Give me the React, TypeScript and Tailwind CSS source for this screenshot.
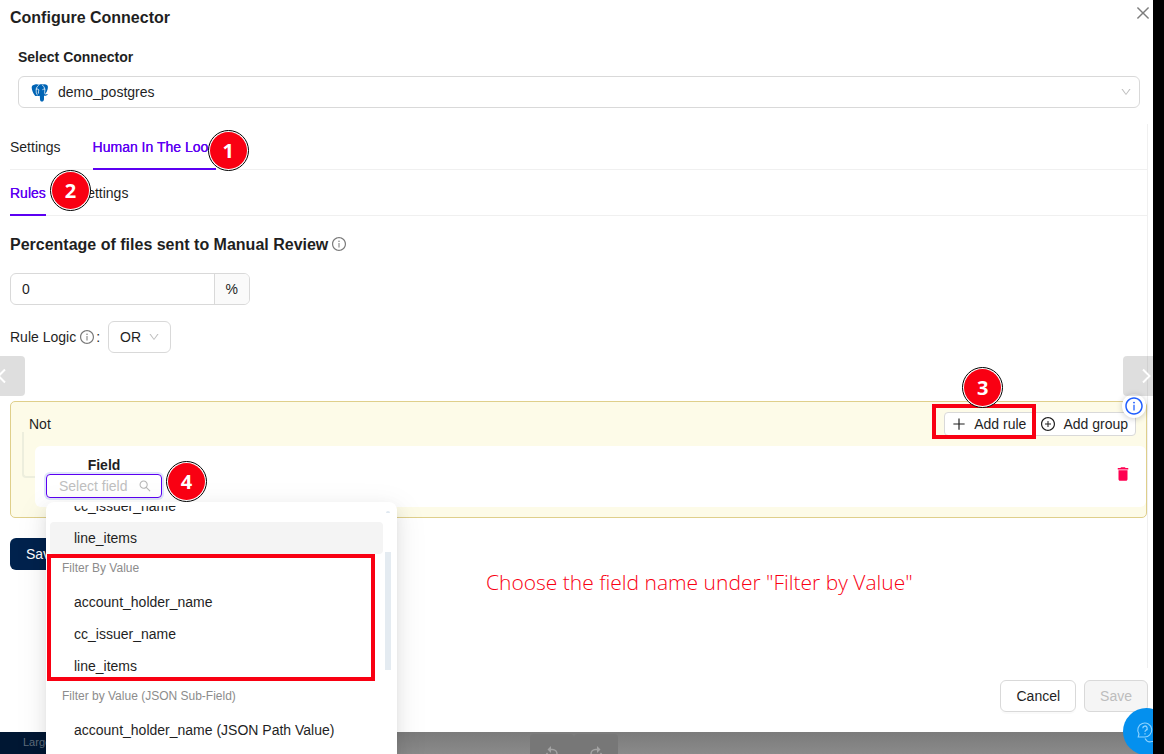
import { useState, type ReactNode } from 'react';
import {
  AiOutlineClose,
  AiOutlineDown,
  AiOutlineInfoCircle,
  AiOutlinePlus,
  AiOutlinePlusCircle,
  AiOutlineSearch,
} from 'react-icons/ai';
import { MdDelete } from 'react-icons/md';

const FIELD_GROUPS = [
  { label: '', options: ['cc_issuer_name', 'line_items'] },
  { label: 'Filter By Value', options: ['account_holder_name', 'cc_issuer_name', 'line_items'] },
  { label: 'Filter by Value (JSON Sub-Field)', options: ['account_holder_name (JSON Path Value)'] },
];

export default function App() {
  const [tab, setTab] = useState('Human In The Loop');
  const [subTab, setSubTab] = useState('Rules');

  return (
    <div className="relative flex h-screen overflow-hidden bg-black font-['Liberation_Sans',Arial,sans-serif] text-sm leading-[22px] text-[#1f1f1f]">
      <div className="relative flex min-w-0 flex-1 flex-col overflow-hidden bg-white">
        <main className="flex min-h-0 flex-1 flex-col pr-[5px] pb-5 pl-2.5">
          <header className="flex items-start justify-between pt-1">
            <h1 className="pt-0.5 text-base leading-6 font-bold">Configure Connector</h1>
            <button aria-label="Close" className="-mr-1 text-[#7d7d7d]">
              <AiOutlineClose size={18} />
            </button>
          </header>

          <div className="mt-4 pr-2 pl-2">
            <label htmlFor="connector" className="block font-bold">Select Connector</label>
            <div className="relative mt-2">
              <select id="connector" className="h-8 w-full appearance-none rounded-md border border-[#d9d9d9] bg-white pl-[39px]">
                <option>demo_postgres</option>
              </select>
              <PostgresLogo />
              <AiOutlineDown size={12} className="pointer-events-none absolute top-2.5 right-2 text-[#bfbfbf]" />
            </div>
          </div>

          <section className="mt-4 flex-1 border-r border-[#f0f0f0]">
            <nav className="flex gap-8 border-b border-[#f0f0f0]">
              <Tab label="Settings" active={tab === 'Settings'} onClick={() => setTab('Settings')} />
              <div className="relative">
                <Tab label="Human In The Loop" active={tab === 'Human In The Loop'} onClick={() => setTab('Human In The Loop')} />
                <Step className="top-1.5 left-[115px]">1</Step>
              </div>
            </nav>
            <nav className="flex gap-8 border-b border-[#f0f0f0]">
              <div className="relative">
                <Tab label="Rules" active={subTab === 'Rules'} onClick={() => setSubTab('Rules')} />
                <Step className="top-0 left-10">2</Step>
              </div>
              <Tab label="Settings" active={subTab === 'Settings'} onClick={() => setSubTab('Settings')} />
            </nav>

            <label htmlFor="percentage" className="mt-4 flex items-center gap-[3px] text-base leading-[26px] font-bold">
              Percentage of files sent to Manual Review
              <AiOutlineInfoCircle size={16} className="-mt-0.5 text-[#7a7a7a]" />
            </label>
            <div className="mt-[15px] flex h-8 w-60 overflow-hidden rounded-md border border-[#d9d9d9]">
              <input id="percentage" defaultValue="0" className="min-w-0 flex-1 px-[11px]" />
              <span className="flex items-center border-l border-[#d9d9d9] bg-[#fafafa] px-[11px]">%</span>
            </div>

            <div className="mt-4 flex items-center">
              <label htmlFor="logic" className="flex items-center gap-[3px]">
                Rule Logic
                <span className="flex items-center gap-px">
                  <AiOutlineInfoCircle size={16} className="text-[#7a7a7a]" />:
                </span>
              </label>
              <div className="relative ml-2">
                <select id="logic" className="h-8 w-[63px] appearance-none rounded-md border border-[#d9d9d9] bg-white pl-[11px]">
                  <option>OR</option>
                  <option>AND</option>
                </select>
                <AiOutlineDown size={12} className="pointer-events-none absolute top-2.5 right-[11px] text-[#bfbfbf]" />
              </div>
            </div>

            <RuleGroup />

            <button className="mt-5 h-8 rounded-md bg-[#00224d] px-4 text-white">Save</button>
          </section>

          <footer className="mt-3 flex justify-end gap-2">
            <button className="h-8 rounded-md border border-[#d9d9d9] px-[15px] shadow-[0_2px_0_rgba(0,0,0,0.02)]">Cancel</button>
            <button disabled className="h-8 rounded-md border border-[#d9d9d9] bg-[#f5f5f5] px-[15px] text-[#bdbdbd]">Save</button>
          </footer>
        </main>

        <BackdropStrip />

        <p className="absolute top-[566px] left-[486px] font-['Open_Sans','Noto_Sans',sans-serif] text-[21px] leading-8 font-light text-[#f90012]">
          Choose the field name under "Filter by Value"
        </p>

        <button
          aria-label="Help"
          className="absolute top-[394px] right-[7px] flex size-6 items-center justify-center rounded-full bg-white text-[#1f5eff] shadow-[0_1px_6px_rgba(0,0,0,0.2)]"
        >
          <AiOutlineInfoCircle size={20} />
        </button>
        <button aria-label="Chat" className="absolute -right-[17px] -bottom-px flex size-[47px] items-center justify-center rounded-full bg-[#0490ee] text-[#8fd3ff]">
          <ChatIcon />
        </button>
      </div>
      <div className="w-[11px] shrink-0" />

      {/* carousel arrows */}
      <button aria-label="Previous" className="absolute top-[356px] -left-[22px] flex h-10 w-[47px] items-center justify-center rounded-r bg-black/13 text-white">
        <Chevron d="M9 1.5 2.5 8 9 14.5" />
      </button>
      <button aria-label="Next" className="absolute top-[356px] -right-1.5 flex h-10 w-[47px] items-center justify-center rounded-l bg-black/13 text-white">
        <Chevron d="M2 1.5 8.5 8 2 14.5" />
      </button>
    </div>
  );
}

function Tab({ label, active, onClick }: { label: string; active: boolean; onClick: () => void }) {
  return (
    <button
      onClick={onClick}
      className={`-mb-px block h-[46px] border-b-2 pt-0.5 ${active ? 'border-[#5c00f2] text-[#5c00f2] [text-shadow:0_0_0.25px_currentcolor]' : 'border-transparent'}`}
    >
      {label}
    </button>
  );
}

// Numbered walkthrough marker
function Step({ children, className }: { children: ReactNode; className: string }) {
  return (
    <span
      className={`absolute z-20 flex size-[41px] items-center justify-center rounded-full border border-black bg-white p-px ${className}`}
    >
      <span className="flex size-full items-center justify-center rounded-full bg-[#f90012] font-['Open_Sans','Noto_Sans',sans-serif] text-xl font-bold text-white">
        {children}
      </span>
    </span>
  );
}

function RuleGroup() {
  return (
    <div className="mt-12 rounded-[5px] border border-[#dfcf8b] bg-[#fdfbe8] py-2.5 pl-[11px]">
      <div className="flex h-6 items-center justify-between pr-2.5 pl-[7px]">
        <span>Not</span>
        <div className="flex">
          <div className="relative z-10">
            <button className="flex h-6 items-center gap-[7px] rounded-l border border-[#d9d9d9] bg-white pr-[7px] pl-1.5">
              <AiOutlinePlus size={16} />
              Add rule
            </button>
            <div className="pointer-events-none absolute -top-2 -right-0.5 -bottom-[3px] -left-3 border-4 border-[#f90012]" />
            <Step className="-top-[45px] left-[18px]">3</Step>
          </div>
          <button className="-ml-px flex h-6 items-center gap-[7px] rounded-r border border-[#d9d9d9] bg-white pr-[7px] pl-1.5">
            <AiOutlinePlusCircle size={16} />
            Add group
          </button>
        </div>
      </div>

      <div className="mt-2.5 flex items-start">
        <div className="-mt-3.5 h-[46px] w-[13px] shrink-0 rounded-bl border-b-2 border-l-2 border-[#edeedd]" />
        <div className="flex flex-1 items-start justify-between rounded-md bg-white pt-2 pr-3.5 pb-[9px] pl-[11px]">
          <div className="relative w-[116px]">
            <label htmlFor="field" className="block pt-0.5 text-center leading-[18px] font-bold">Field</label>
            <input
              id="field"
              placeholder="Select field"
              className="block h-6 w-full rounded border border-[#5c00f2] pr-7 pl-3 shadow-[0_0_0_2px_#dfe6fa] outline-none placeholder:text-[#bfbfbf]"
            />
            <AiOutlineSearch size={14} className="absolute right-2.5 bottom-[5px] text-[#b5b5b5]" />
            <Step className="top-[7px] left-[120px]">4</Step>
            <FieldDropdown />
          </div>
          <button aria-label="Delete rule" className="mt-[11px] text-[#ff0051]">
            <MdDelete size={18} />
          </button>
        </div>
      </div>
    </div>
  );
}

function FieldDropdown() {
  return (
    <div className="absolute top-full left-0 z-10 mt-1 w-[351px] rounded-lg bg-white p-1 shadow-[0_6px_16px_rgba(0,0,0,0.08),0_3px_6px_-4px_rgba(0,0,0,0.12),0_9px_28px_8px_rgba(0,0,0,0.05)]">
      <div className="flex h-64 gap-0.5 overflow-hidden">
        {/* list is scrolled part of an option down */}
        <div className="-mt-4 w-[333px]">
          {FIELD_GROUPS.map((group, i) => (
            <div key={group.label} role="group" aria-label={group.label}>
              {group.label && <div className="h-8 px-3 pt-[3px] text-xs leading-[22px] text-[#8c8c8c]">{group.label}</div>}
              {group.options.map(option => (
                <div
                  key={option}
                  role="option"
                  aria-selected={false}
                  className={`h-8 rounded px-6 py-[5px] ${i === 0 && option === 'line_items' ? 'bg-[#f4f4f4]' : ''}`}
                >
                  {option}
                </div>
              ))}
            </div>
          ))}
        </div>
        <div className="flex w-1.5 flex-col items-center pt-[5px]">
          <div className="h-0.5 w-1 rounded-t-full bg-[#dfe8f0]" />
          <div className="mt-[39px] h-[118px] w-full bg-[#e4ebf1]" />
        </div>
      </div>
      <div className="pointer-events-none absolute top-[52px] left-px h-[127px] w-[328px] border-4 border-[#f90012]" />
    </div>
  );
}

// Sliver of the dimmed page that shows under the dialog
function BackdropStrip() {
  return (
    <div className="flex h-[22px] shrink-0 items-start bg-linear-to-b from-[#7b7b7b] to-[#8a8a8a]">
      <div className="h-full w-40 bg-[#001733] pl-[23px] text-[11px] leading-5 text-[#5f6b7a]">Large</div>
      <div className="ml-[370px] flex pt-0.5 text-[#a3a3a3]">
        <div className="flex h-5 w-11 justify-center rounded-t bg-[#777777] pt-3">
          <TurnIcon />
        </div>
        <div className="flex h-5 w-11 justify-center rounded-t bg-[#777777] pt-3">
          <TurnIcon flipped />
        </div>
      </div>
    </div>
  );
}

function PostgresLogo() {
  return (
    <svg width="18" height="18" viewBox="0 0 18 18" className="pointer-events-none absolute top-2 left-[13px]">
      <path
        d="M4 .5c1.500-.4 3-.2 4.200.3C9.500.2 11 .2 12 .5c1.500-.4 3.200-.2 4.300.8 1.200 1.300.5 4.200-.6 6.400-.5 1-1 1.800-1.500 2.300 1 .4 2 .2 2.800 0-.5 1.300-2.300 2-4 1.700v3.500c-.2 1.500-1 2.300-2 2.300-1.300 0-1.900-.8-2-2.300l-.2-3.500c-1 .6-2 .5-2.600-.2-.7.8-1.700.8-2.500-.3C2 9.200.8 6 .7 3.800.6 2 1.800.9 4 .5z"
        fill="#0064b5"
      />
      <g fill="none" stroke="#fff" strokeWidth=".8" strokeLinecap="round">
        <path d="M7.400 1.600C5.600 3 5 4.500 5.200 6.500c.2 1.500-.3 2.500.8 4" />
        <path d="M11.600 1.300c1.700 1.500 2.600 3.500 2.200 5.500-.2 1.200-.4 2.300.3 3.400" />
        <path d="M5.500 5.200c1.200-.5 2.200-.2 2.300.9.100 1.200-.8 2-.6 3.200" />
        <path d="M13.700 5.300c-.8-.3-1.500-.2-2 .2" />
      </g>
    </svg>
  );
}

function Chevron({ d }: { d: string }) {
  return (
    <svg width="11" height="16" viewBox="0 0 11 16" fill="none" stroke="currentColor" strokeWidth="2">
      <path d={d} />
    </svg>
  );
}

function TurnIcon({ flipped }: { flipped?: boolean }) {
  return (
    <svg width="14" height="14" viewBox="0 0 14 14" fill="none" className={flipped ? '-scale-x-100' : ''}>
      <path d="M5 3.5h2.500a4.500 4.500 0 0 1 4.500 4.500M1.500 7l1.500 2" stroke="currentColor" strokeWidth="1.5" />
      <path d="M6 0v7L2.500 3.500z" fill="currentColor" />
    </svg>
  );
}

function ChatIcon() {
  return (
    <svg width="22" height="22" viewBox="0 0 22 22" fill="none" stroke="currentColor" strokeWidth="1.1">
      <path d="M3 13A7 7 0 1 1 8 16H2.200z" />
      <path d="M6.800 7.200a2.200 2.200 0 1 1 3.200 2c-.7.4-1 .8-1 1.600M9 12.300v1.100" strokeWidth="1.3" />
      <path d="M9 17.500a6 6 0 0 0 7 3h4l-1-2.500a6 6 0 0 0-1.500-8" />
    </svg>
  );
}
